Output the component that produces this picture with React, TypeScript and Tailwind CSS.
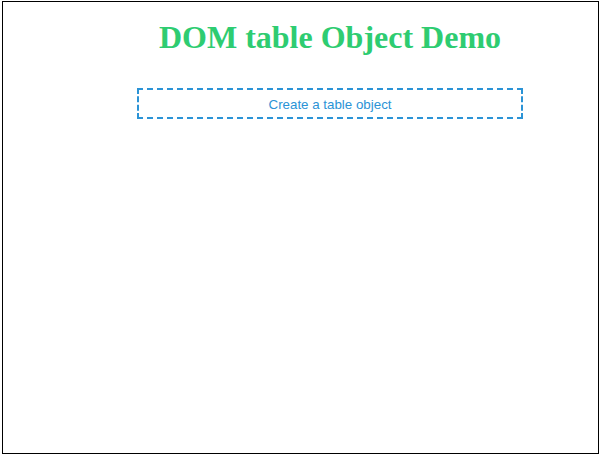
export default function App() {
  return (
    <div className="ml-[2px] mt-[1px] w-[597px] h-[453px] border border-black bg-white">
      <div className="ml-[134px] w-[386px] flex flex-col">
        <h1
          className="mt-[17px] text-center text-[32px] leading-[36px] font-bold text-[#2ecc71]"
          style={{ fontFamily: '"Liberation Serif", "Times New Roman", serif' }}
        >
          DOM table Object Demo
        </h1>
        <button
          className="mt-[33px] h-[31px] w-[386px] border-2 border-dashed border-[#2b93d6] bg-white flex items-center justify-center text-[13.33px] text-[#2b93d6] pt-[2px]"
          style={{ fontFamily: '"Liberation Sans", Arial, sans-serif' }}
        >
          Create a table object
        </button>
      </div>
    </div>
  );
}
